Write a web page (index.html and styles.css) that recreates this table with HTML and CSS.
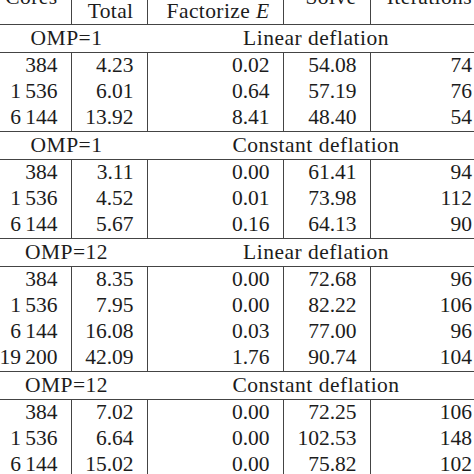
FILE: index.html
```html
<!DOCTYPE html>
<html lang="en">
<head>
    <meta charset="UTF-8">
    <meta name="viewport" content="width=device-width, initial-scale=1.0">
    <title>Timings table</title>
    <link rel="stylesheet" href="styles.css">
</head>
<body>

<table class="results">
    <colgroup>
        <col class="c-cores">
        <col class="c-total">
        <col class="c-fact">
        <col class="c-solve">
        <col class="c-iter">
    </colgroup>
    <thead>
        <tr class="head-top">
            <th rowspan="2" class="vl">Cores</th>
            <th colspan="2" class="vl under mid">Time</th>
            <th rowspan="2" class="vl">Solve</th>
            <th rowspan="2">Iterations</th>
        </tr>
        <tr class="head-sub">
            <th class="vl">Total</th>
            <th class="vl">Factorize <i>E</i></th>
        </tr>
    </thead>
    <tbody>
        <tr class="section">
            <td colspan="2">OMP=1</td>
            <td colspan="3">Linear deflation</td>
        </tr>
        <tr><td class="vl">384</td><td class="vl">4.23</td><td class="vl">0.02</td><td class="vl">54.08</td><td>74</td></tr>
        <tr><td class="vl">1&thinsp;536</td><td class="vl">6.01</td><td class="vl">0.64</td><td class="vl">57.19</td><td>76</td></tr>
        <tr><td class="vl">6&thinsp;144</td><td class="vl">13.92</td><td class="vl">8.41</td><td class="vl">48.40</td><td>54</td></tr>

        <tr class="section">
            <td colspan="2">OMP=1</td>
            <td colspan="3">Constant deflation</td>
        </tr>
        <tr><td class="vl">384</td><td class="vl">3.11</td><td class="vl">0.00</td><td class="vl">61.41</td><td>94</td></tr>
        <tr><td class="vl">1&thinsp;536</td><td class="vl">4.52</td><td class="vl">0.01</td><td class="vl">73.98</td><td>112</td></tr>
        <tr><td class="vl">6&thinsp;144</td><td class="vl">5.67</td><td class="vl">0.16</td><td class="vl">64.13</td><td>90</td></tr>

        <tr class="section">
            <td colspan="2">OMP=12</td>
            <td colspan="3">Linear deflation</td>
        </tr>
        <tr><td class="vl">384</td><td class="vl">8.35</td><td class="vl">0.00</td><td class="vl">72.68</td><td>96</td></tr>
        <tr><td class="vl">1&thinsp;536</td><td class="vl">7.95</td><td class="vl">0.00</td><td class="vl">82.22</td><td>106</td></tr>
        <tr><td class="vl">6&thinsp;144</td><td class="vl">16.08</td><td class="vl">0.03</td><td class="vl">77.00</td><td>96</td></tr>
        <tr><td class="vl">19&thinsp;200</td><td class="vl">42.09</td><td class="vl">1.76</td><td class="vl">90.74</td><td>104</td></tr>

        <tr class="section">
            <td colspan="2">OMP=12</td>
            <td colspan="3">Constant deflation</td>
        </tr>
        <tr><td class="vl">384</td><td class="vl">7.02</td><td class="vl">0.00</td><td class="vl">72.25</td><td>106</td></tr>
        <tr><td class="vl">1&thinsp;536</td><td class="vl">6.64</td><td class="vl">0.00</td><td class="vl">102.53</td><td>148</td></tr>
        <tr><td class="vl">6&thinsp;144</td><td class="vl">15.02</td><td class="vl">0.00</td><td class="vl">75.82</td><td>102</td></tr>
    </tbody>
</table>

</body>
</html>
```

FILE: styles.css
```css
body {
    margin: 0;
    padding: 0;
    background: #fff;
    color: #1c1c1c;
    font-family: "Liberation Serif", "Times New Roman", serif;
    font-size: 21.5px;
    overflow: hidden;
}
.results {
    border-collapse: collapse;
    table-layout: fixed;
    width: 499px;
    margin-left: -14px;
    margin-top: -28px;
}
.c-cores { width: 85px; }
.c-total { width: 76px; }
.c-fact { width: 136px; }
.c-solve { width: 87px; }
.c-iter { width: 115px; }

.results th,
.results td {
    padding: 0 13px 0 0;
    text-align: right;
    white-space: nowrap;
    line-height: 1;
    height: 26px;
}
.results th {
    font-weight: normal;
    letter-spacing: 0.4px;
}
.results th.mid {
    text-align: center;
    padding: 0;
}
.results .vl {
    border-right: 1px solid #444;
}
.results .under {
    border-bottom: 1px solid #444;
}
.head-top th {
    height: 27px;
}
.head-sub th {
    height: 24px;
    vertical-align: middle;
}
.section td {
    height: 27px;
    text-align: center;
    padding: 0;
    border-top: 1px solid #444;
    border-bottom: 1px solid #444;
    letter-spacing: 0.5px;
}
```
